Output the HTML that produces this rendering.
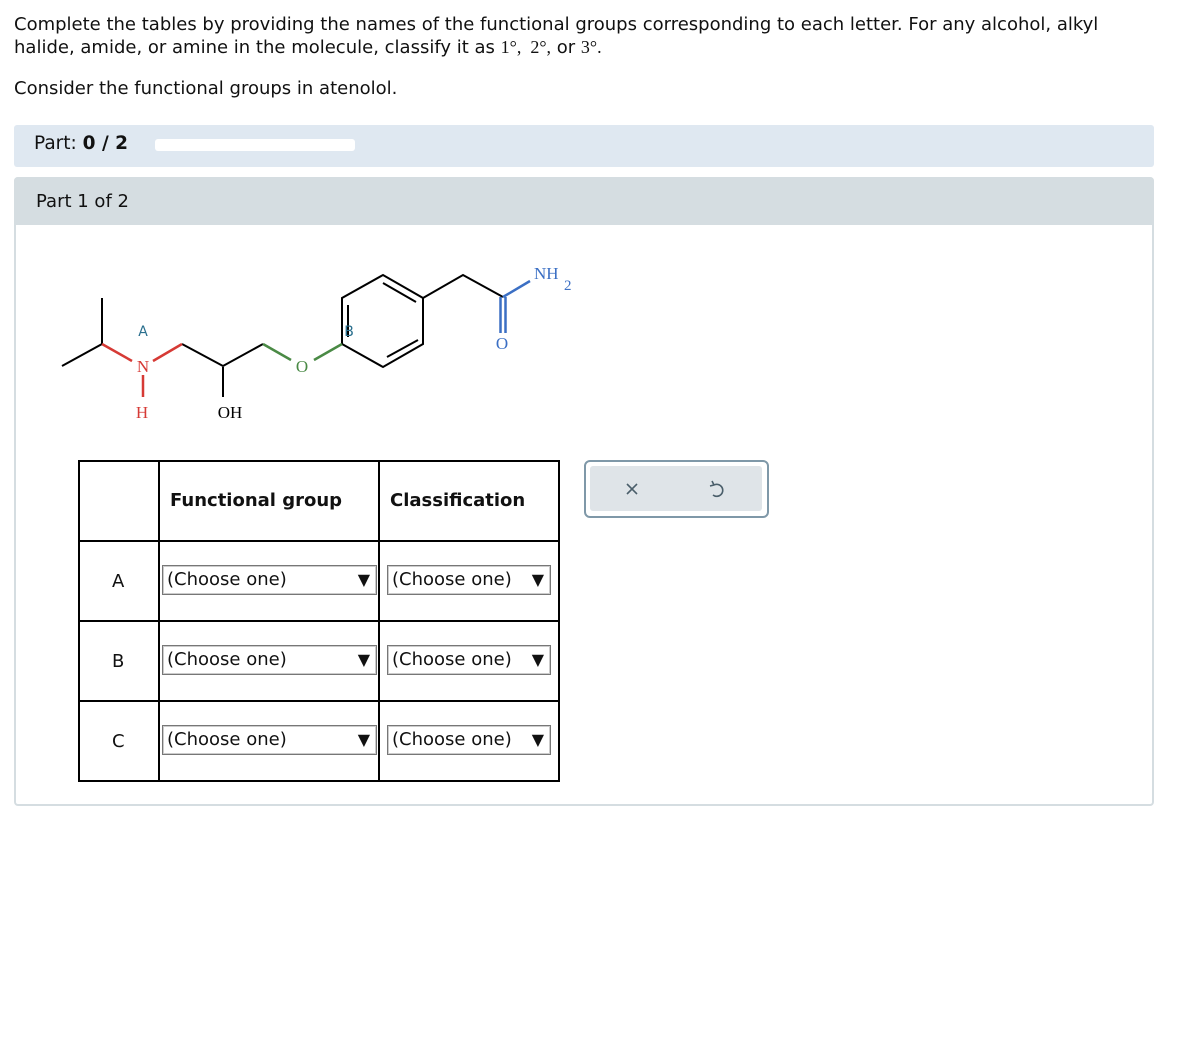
<!DOCTYPE html>
<html><head><style>
body{margin:0;background:#fff;font-family:"DejaVu Sans","Liberation Sans",sans-serif;color:#111;font-size:18px;width:1186px;height:1040px;position:relative;overflow:hidden}
.abs{position:absolute}
p{margin:0}
.sel{position:absolute;border:1px solid #777;box-shadow:inset 0 0 0 1px #ccc;font-size:18px;line-height:28px;padding-left:4px;box-sizing:border-box;height:30px;white-space:nowrap}
.sel span{position:absolute;right:6px;top:0;font-size:16px}
.c{position:absolute;border:2px solid #000;box-sizing:border-box}
</style></head><body>
<div class="abs" style="left:14px;top:14px;width:1130px;line-height:22px;font-size:18px">Complete the tables by providing the names of the functional groups corresponding to each letter. For any alcohol, alkyl halide, amide, or amine in the molecule, classify it as <span style="font-family:'Liberation Serif',serif">1°,&nbsp; 2°,</span> or <span style="font-family:'Liberation Serif',serif">3°.</span></div>
<div class="abs" style="left:14px;top:78px;font-size:18px">Consider the functional groups in atenolol.</div>
<div class="abs" style="left:14px;top:125px;width:1140px;height:42px;background:#dfe8f1;border-radius:3px"></div>
<div class="abs" style="left:34px;top:133px;font-size:18.5px">Part: <b>0 / 2</b></div>
<div class="abs" style="left:155px;top:139px;width:200px;height:12px;background:#fff;border-radius:3px"></div>
<div class="abs" style="left:14px;top:177px;width:1140px;height:629px;border:2px solid #d5dde1;box-sizing:border-box;border-radius:4px"></div>
<div class="abs" style="left:14px;top:177px;width:1140px;height:48px;background:#d5dde1;border-radius:4px 4px 0 0"></div>
<div class="abs" style="left:36px;top:191px;font-size:18px">Part 1 of 2</div>
<svg class="abs" style="left:0;top:0" width="1186" height="440" font-family="Liberation Serif,serif" font-size="17">
<g stroke="#000" stroke-width="2" fill="none">
<path d="M102 298V344L62 366M182 344L223 366L263 344M223 367V397M342 344V298L383 275L423 298V344L383 367L342 344M348 305V337M383 283L416 302M387 357L418 340M423 298L463 275L503 297"/>
</g>
<path d="M102 344L132 361M153 361L182 344M143 375V397" stroke="#d63a35" stroke-width="2.5" fill="none"/>
<path d="M263 344L291 360M314 360L342 344" stroke="#4a8a45" stroke-width="2.5" fill="none"/>
<path d="M503 297L530 281M500.5 297V333M505.5 297V333" stroke="#3b6fc4" stroke-width="2.5" fill="none"/>
<text x="143" y="372" fill="#d63a35" text-anchor="middle">N</text>
<text x="142" y="418" fill="#d63a35" text-anchor="middle">H</text>
<text x="230" y="418" fill="#000" text-anchor="middle">OH</text>
<text x="302" y="372" fill="#4a8a45" text-anchor="middle">O</text>
<text x="502" y="349" fill="#3b6fc4" text-anchor="middle">O</text>
<text x="534" y="279" fill="#3b6fc4">NH</text>
<text x="564" y="290" fill="#3b6fc4" font-size="15">2</text>
<text x="143" y="336" fill="#2a6f8e" font-family="DejaVu Sans,sans-serif" font-size="14" text-anchor="middle">A</text>
<text x="349" y="336" fill="#2a6f8e" font-family="DejaVu Sans,sans-serif" font-size="14" text-anchor="middle">B</text>
</svg>
<div class="c" style="left:78px;top:460px;width:82px;height:82px"></div>
<div class="c" style="left:158px;top:460px;width:222px;height:82px"></div>
<div class="c" style="left:378px;top:460px;width:182px;height:82px"></div>
<div class="c" style="left:78px;top:540px;width:82px;height:82px"></div>
<div class="c" style="left:158px;top:540px;width:222px;height:82px"></div>
<div class="c" style="left:378px;top:540px;width:182px;height:82px"></div>
<div class="c" style="left:78px;top:620px;width:82px;height:82px"></div>
<div class="c" style="left:158px;top:620px;width:222px;height:82px"></div>
<div class="c" style="left:378px;top:620px;width:182px;height:82px"></div>
<div class="c" style="left:78px;top:700px;width:82px;height:82px"></div>
<div class="c" style="left:158px;top:700px;width:222px;height:82px"></div>
<div class="c" style="left:378px;top:700px;width:182px;height:82px"></div>
<div class="abs" style="left:170px;top:490px;font-weight:bold;font-size:18px">Functional group</div>
<div class="abs" style="left:390px;top:490px;font-weight:bold;font-size:18px">Classification</div>
<div class="abs" style="left:112px;top:571px">A</div>
<div class="abs" style="left:112px;top:651px">B</div>
<div class="abs" style="left:112px;top:731px">C</div>
<div class="sel" style="left:162px;top:565px;width:215px">(Choose one)<span>▼</span></div>
<div class="sel" style="left:387px;top:565px;width:164px">(Choose one)<span>▼</span></div>
<div class="sel" style="left:162px;top:645px;width:215px">(Choose one)<span>▼</span></div>
<div class="sel" style="left:387px;top:645px;width:164px">(Choose one)<span>▼</span></div>
<div class="sel" style="left:162px;top:725px;width:215px">(Choose one)<span>▼</span></div>
<div class="sel" style="left:387px;top:725px;width:164px">(Choose one)<span>▼</span></div>
<div class="abs" style="left:584px;top:460px;width:185px;height:58px;border:2px solid #7f98a8;border-radius:6px;box-sizing:border-box"></div>
<div class="abs" style="left:590px;top:466px;width:172px;height:45px;background:#dfe4e8;border-radius:3px"></div>
<svg class="abs" style="left:590px;top:466px" width="172" height="45">
<path d="M37 18L47 28M47 18L37 28" stroke="#4a5e6a" stroke-width="1.6"/>
<path d="M124 19A6 6 0 1 1 123 29M124 19L122 15M124 19L120 20" stroke="#4a5e6a" stroke-width="1.6" fill="none"/>
</svg>
</body></html>
